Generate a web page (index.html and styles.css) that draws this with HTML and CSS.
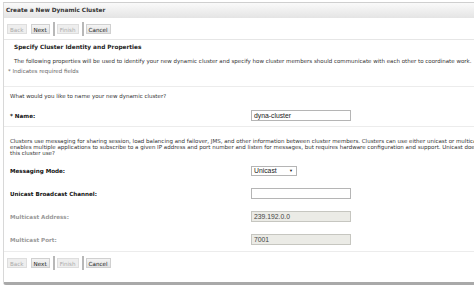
FILE: index.html
```html
<!DOCTYPE html>
<html>
<head>
<meta charset="utf-8">
<link rel="stylesheet" href="styles.css">
</head>
<body>
<div class="panel">
  <div class="hdr">Create a New Dynamic Cluster</div>
  <div class="bar">
    <span class="btn dis">Back</span>
    <span class="btn">Next</span>
    <span class="sep"></span>
    <span class="btn dis">Finish</span>
    <span class="sep"></span>
    <span class="btn">Cancel</span>
  </div>
  <div class="intro">
    <div class="ttl">Specify Cluster Identity and Properties</div>
    <div class="desc">The following properties will be used to identify your new dynamic cluster and specify how cluster members should communicate with each other to coordinate work.</div>
    <div class="req">* Indicates required fields</div>
  </div>
  <div class="sec name">
    <div class="q">What would you like to name your new dynamic cluster?</div>
    <div class="row first">
      <div class="lbl">* Name:</div>
      <div class="inp">dyna-cluster</div>
    </div>
  </div>
  <div class="sec msg">
    <div class="q wrap">Clusters use messaging for sharing session, load balancing and failover, JMS, and other information between cluster members. Clusters can use either unicast or multicast messaging. Multicast<br>enables multiple applications to subscribe to a given IP address and port number and listen for messages, but requires hardware configuration and support. Unicast does not. What messaging mode should<br>this cluster use?</div>
    <div class="row first">
      <div class="lbl">Messaging Mode:</div>
      <div class="sel">Unicast <span class="arr">&#9660;</span></div>
    </div>
    <div class="row">
      <div class="lbl">Unicast Broadcast Channel:</div>
      <div class="inp"></div>
    </div>
    <div class="row">
      <div class="lbl off">Multicast Address:</div>
      <div class="inp dis">239.192.0.0</div>
    </div>
    <div class="row">
      <div class="lbl off">Multicast Port:</div>
      <div class="inp dis">7001</div>
    </div>
  </div>
  <div class="bar bottom">
    <span class="btn dis">Back</span>
    <span class="btn">Next</span>
    <span class="sep"></span>
    <span class="btn dis">Finish</span>
    <span class="sep"></span>
    <span class="btn">Cancel</span>
  </div>
</div>
</body>
</html>
```
FILE: styles.css
```css
html, body {
  margin: 0;
  padding: 0;
  background: #fff;
  overflow: hidden;
}
body {
  font-family: "DejaVu Sans", Tahoma, sans-serif;
  font-size: 5.5px;
  color: #333;
}
.panel {
  margin: 2px 0 0 3px;
  border-top: 1px solid #cfcfcf;
  border-left: 1px solid #d8d8d8;
  border-bottom: 3px solid #a9a9a9;
  border-bottom-left-radius: 3px;
  height: 283px;
  box-sizing: border-box;
  overflow: hidden;
}
.hdr {
  height: 15px;
  line-height: 15px;
  padding-left: 2px;
  font-weight: bold;
  font-size: 5.8px;
  color: #333;
  background: linear-gradient(#fafafa, #e4e4e4);
}
.bar {
  height: 21px;
  display: flex;
  align-items: center;
  padding-left: 3px;
  border-bottom: 1px solid #e6e6e6;
  box-sizing: content-box;
}
.bar.bottom {
  border-bottom: none;
}
.btn {
  height: 10px;
  line-height: 10px;
  padding: 0 2px;
  font-size: 5.6px;
  color: #222;
  background: linear-gradient(#f4f4f4, #e2e2e2);
  border: 1px solid #d0d0d0;
  box-sizing: border-box;
  margin-right: 4px;
}
.btn.dis {
  color: #aaa;
  background: #eeeeee;
  border-color: #dedede;
}
.sep {
  width: 2px;
  height: 14px;
  background: #b8b8b8;
  margin: 0 2px 0 -1px;
}
.intro {
  padding: 4px 0 11px 0;
  border-bottom: 1px solid #ececec;
}
.ttl {
  padding-left: 10px;
  font-weight: bold;
  color: #222;
  font-size: 5.8px;
  line-height: 7px;
  margin-bottom: 7px;
}
.desc {
  padding-left: 10px;
  line-height: 7px;
  white-space: nowrap;
}
.req {
  padding-left: 4px;
  line-height: 7px;
  margin-top: 3px;
  color: #666;
}
.sec {
  padding-left: 6px;
  border-bottom: 1px solid #ececec;
}
.sec.name {
  padding-top: 6px;
  padding-bottom: 5px;
}
.sec.msg {
  padding-top: 11px;
  padding-bottom: 6px;
}
.q {
  line-height: 7px;
}
.q.wrap {
  line-height: 6px;
  white-space: nowrap;
}
.row {
  display: grid;
  grid-template-columns: 241px auto;
  align-items: center;
  margin-top: 12px;
}
.row.first {
  margin-top: 10px;
}
.lbl {
  font-weight: bold;
  color: #111;
  font-size: 5.6px;
}
.lbl.off {
  color: #9a9a9a;
}
.inp {
  width: 100px;
  height: 11px;
  box-sizing: border-box;
  border: 1px solid #b5b5b5;
  background: #fff;
  font-family: "Liberation Sans", Arial, sans-serif;
  font-size: 6.8px;
  line-height: 9px;
  padding-left: 2px;
  color: #222;
}
.inp.dis {
  background: #ebebe6;
  border-color: #c6c6c0;
  color: #444;
}
.sel {
  width: 46px;
  height: 10px;
  box-sizing: border-box;
  border: 1px solid #b5b5b5;
  font-family: "Liberation Sans", Arial, sans-serif;
  font-size: 6.8px;
  line-height: 8px;
  padding-left: 2px;
  color: #222;
  display: flex;
  justify-content: space-between;
  padding-right: 3px;
}
.arr {
  font-size: 4px;
}
```
